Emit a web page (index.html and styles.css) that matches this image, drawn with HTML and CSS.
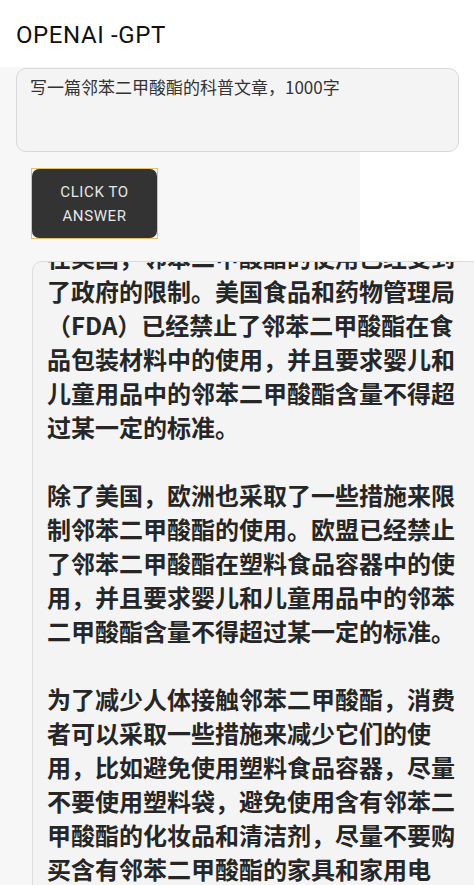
FILE: index.html
```html
<!DOCTYPE html>
<html lang="zh">
<head>
    <meta charset="UTF-8">
    <meta name="viewport" content="width=device-width, initial-scale=1.0">
    <title>OPENAI -GPT</title>
    <link rel="stylesheet" href="styles.css">
</head>
<body>
    <!-- Header -->
    <div class="header">
        <h1>OPENAI -GPT</h1>
    </div>

    <!-- Main panel -->
    <div class="panel">
        <textarea class="question" id="question">写一篇邻苯二甲酸酯的科普文章，1000字</textarea>

        <div class="btn-frame">
            <button class="ask-btn" onclick="answer()">CLICK TO ANSWER</button>
        </div>

        <div class="answer" id="answer">
            <p>在美国，邻苯二甲酸酯的使用已经受到了政府的限制。美国食品和药物管理局（FDA）已经禁止了邻苯二甲酸酯在食品包装材料中的使用，并且要求婴儿和儿童用品中的邻苯二甲酸酯含量不得超过某一定的标准。</p>
            <p>除了美国，欧洲也采取了一些措施来限制邻苯二甲酸酯的使用。欧盟已经禁止了邻苯二甲酸酯在塑料食品容器中的使用，并且要求婴儿和儿童用品中的邻苯二甲酸酯含量不得超过某一定的标准。</p>
            <p>为了减少人体接触邻苯二甲酸酯，消费者可以采取一些措施来减少它们的使用，比如避免使用塑料食品容器，尽量不要使用塑料袋，避免使用含有邻苯二甲酸酯的化妆品和清洁剂，尽量不要购买含有邻苯二甲酸酯的家具和家用电器。</p>
        </div>
    </div>

    <script>
        // answer box is scrolled a little, like in the app
        document.getElementById('answer').scrollTop = 22;

        function answer() {
            document.getElementById('answer').scrollTop = 0;
        }
    </script>
</body>
</html>
```

FILE: styles.css
```css
html, body {
    overflow: hidden;
}
body {
    margin: 0;
    padding: 0;
    background: white;
    font-family: "Noto Sans CJK SC", sans-serif;
}
.header {
    height: 67px;
    box-sizing: border-box;
    padding: 21px 16px 0;
}
.header h1 {
    margin: 0;
    font-family: Roboto, sans-serif;
    font-weight: normal;
    font-size: 24px;
    line-height: 28px;
    letter-spacing: 0.6px;
    color: #111;
}
.panel {
    width: 360px;
    height: 830px;
    box-sizing: border-box;
    padding: 1px 0 0 16px;
    background: #f7f7f7;
}
.question {
    display: block;
    width: 443px;
    height: 84px;
    box-sizing: border-box;
    margin: 0;
    padding: 7px 13px;
    border: 1px solid #d9d9d9;
    border-radius: 10px;
    background: #f4f4f4;
    font-family: "Noto Sans CJK SC", sans-serif;
    font-size: 17px;
    line-height: 22px;
    color: #333;
    resize: none;
    outline: none;
}
.btn-frame {
    display: inline-block;
    margin: 16px 0 0 15px;
    border: 1px solid #e3c36a;
    line-height: 0;
}
.ask-btn {
    width: 125px;
    height: 69px;
    padding: 0 18px;
    border: none;
    border-radius: 7px;
    background: #333;
    color: #e6e6e6;
    font-family: Roboto, sans-serif;
    font-size: 15px;
    line-height: 24px;
    letter-spacing: 0.6px;
    cursor: pointer;
}
.answer {
    width: 450px;
    height: 640px;
    box-sizing: border-box;
    margin: 22px 0 0 16px;
    padding: 0 14px;
    border: 1px solid #dcdcdc;
    border-radius: 10px;
    background: #f4f4f4;
    overflow: hidden;
}
.answer p {
    margin: 0 0 34px;
    font-size: 24px;
    line-height: 34px;
    font-weight: bold;
    color: #262626;
}
```
